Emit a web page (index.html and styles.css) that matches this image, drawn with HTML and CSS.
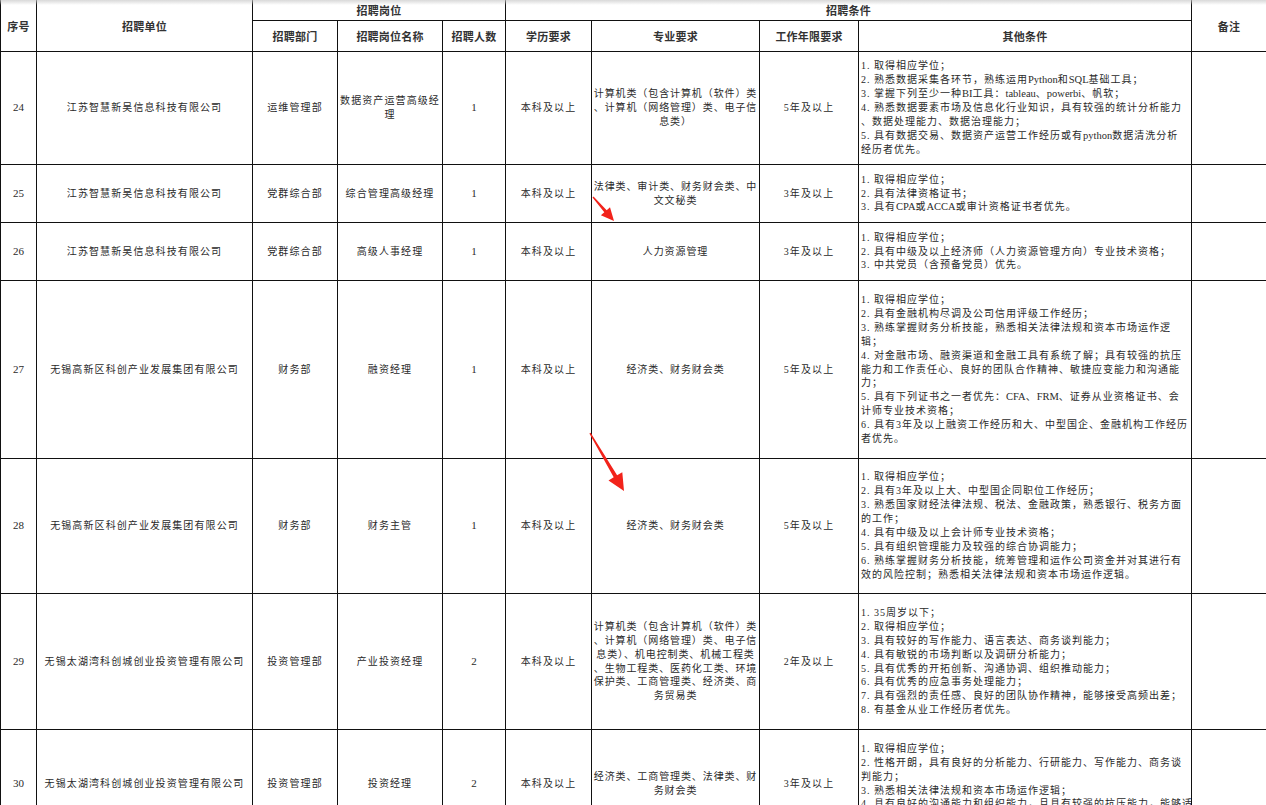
FILE: index.html
```html
<!DOCTYPE html>
<html lang="zh-CN">
<head>
<meta charset="utf-8">
<title>招聘岗位表</title>
<link rel="stylesheet" href="styles.css">
</head>
<body>
<div class="page">
<table class="grid">
  <colgroup>
    <col class="w-no"><col class="w-unit"><col class="w-dept"><col class="w-post"><col class="w-num"><col class="w-edu"><col class="w-major"><col class="w-year"><col class="w-other"><col class="w-note">
  </colgroup>
  <thead>
    <tr class="h1">
      <th rowspan="2">序号</th>
      <th rowspan="2">招聘单位</th>
      <th colspan="3">招聘岗位</th>
      <th colspan="4">招聘条件</th>
      <th rowspan="2">备注</th>
    </tr>
    <tr class="h2">
      <th>招聘部门</th>
      <th>招聘岗位名称</th>
      <th>招聘人数</th>
      <th>学历要求</th>
      <th>专业要求</th>
      <th>工作年限要求</th>
      <th>其他条件</th>
    </tr>
  </thead>
  <tbody>
    <tr class="r24">
      <td class="num">24</td>
      <td>江苏智慧新吴信息科技有限公司</td>
      <td>运维管理部</td>
      <td>数据资产运营高级经<br>理</td>
      <td class="num">1</td>
      <td>本科及以上</td>
      <td class="major">计算机类（包含计算机（软件）类<br>、计算机（网络管理）类、电子信<br>息类）</td>
      <td>5年及以上</td>
      <td class="other">1. 取得相应学位；<br>2. 熟悉数据采集各环节，熟练运用<span class="lat">Python</span>和<span class="lat">SQL</span>基础工具；<br>3. 掌握下列至少一种<span class="lat">BI</span>工具：<span class="lat">tableau</span>、<span class="lat">powerbi</span>、帆软；<br>4. 熟悉数据要素市场及信息化行业知识，具有较强的统计分析能力<br>、数据处理能力、数据治理能力；<br>5. 具有数据交易、数据资产运营工作经历或有<span class="lat">python</span>数据清洗分析<br>经历者优先。</td>
      <td></td>
    </tr>
    <tr class="r25">
      <td class="num">25</td>
      <td>江苏智慧新吴信息科技有限公司</td>
      <td>党群综合部</td>
      <td>综合管理高级经理</td>
      <td class="num">1</td>
      <td>本科及以上</td>
      <td class="major">法律类、审计类、财务财会类、中<br>文文秘类</td>
      <td>3年及以上</td>
      <td class="other">1. 取得相应学位；<br>2. 具有法律资格证书；<br>3. 具有<span class="lat">CPA</span>或<span class="lat">ACCA</span>或审计资格证书者优先。</td>
      <td></td>
    </tr>
    <tr class="r26">
      <td class="num">26</td>
      <td>江苏智慧新吴信息科技有限公司</td>
      <td>党群综合部</td>
      <td>高级人事经理</td>
      <td class="num">1</td>
      <td>本科及以上</td>
      <td class="major">人力资源管理</td>
      <td>3年及以上</td>
      <td class="other">1. 取得相应学位；<br>2. 具有中级及以上经济师（人力资源管理方向）专业技术资格；<br>3. 中共党员（含预备党员）优先。</td>
      <td></td>
    </tr>
    <tr class="r27">
      <td class="num">27</td>
      <td>无锡高新区科创产业发展集团有限公司</td>
      <td>财务部</td>
      <td>融资经理</td>
      <td class="num">1</td>
      <td>本科及以上</td>
      <td class="major">经济类、财务财会类</td>
      <td>5年及以上</td>
      <td class="other">1. 取得相应学位；<br>2. 具有金融机构尽调及公司信用评级工作经历；<br>3. 熟练掌握财务分析技能，熟悉相关法律法规和资本市场运作逻<br>辑；<br>4. 对金融市场、融资渠道和金融工具有系统了解；具有较强的抗压<br>能力和工作责任心、良好的团队合作精神、敏捷应变能力和沟通能<br>力；<br>5. 具有下列证书之一者优先：<span class="lat">CFA</span>、<span class="lat">FRM</span>、证券从业资格证书、会<br>计师专业技术资格；<br>6. 具有3年及以上融资工作经历和大、中型国企、金融机构工作经历<br>者优先。</td>
      <td></td>
    </tr>
    <tr class="r28">
      <td class="num">28</td>
      <td>无锡高新区科创产业发展集团有限公司</td>
      <td>财务部</td>
      <td>财务主管</td>
      <td class="num">1</td>
      <td>本科及以上</td>
      <td class="major">经济类、财务财会类</td>
      <td>5年及以上</td>
      <td class="other">1. 取得相应学位；<br>2. 具有3年及以上大、中型国企同职位工作经历；<br>3. 熟悉国家财经法律法规、税法、金融政策，熟悉银行、税务方面<br>的工作；<br>4. 具有中级及以上会计师专业技术资格；<br>5. 具有组织管理能力及较强的综合协调能力；<br>6. 熟练掌握财务分析技能，统筹管理和运作公司资金并对其进行有<br>效的风险控制；熟悉相关法律法规和资本市场运作逻辑。</td>
      <td></td>
    </tr>
    <tr class="r29">
      <td class="num">29</td>
      <td>无锡太湖湾科创城创业投资管理有限公司</td>
      <td>投资管理部</td>
      <td>产业投资经理</td>
      <td class="num">2</td>
      <td>本科及以上</td>
      <td class="major">计算机类（包含计算机（软件）类<br>、计算机（网络管理）类、电子信<br>息类）、机电控制类、机械工程类<br>、生物工程类、医药化工类、环境<br>保护类、工商管理类、经济类、商<br>务贸易类</td>
      <td>2年及以上</td>
      <td class="other">1. 35周岁以下；<br>2. 取得相应学位；<br>3. 具有较好的写作能力、语言表达、商务谈判能力；<br>4. 具有敏锐的市场判断以及调研分析能力；<br>5. 具有优秀的开拓创新、沟通协调、组织推动能力；<br>6. 具有优秀的应急事务处理能力；<br>7. 具有强烈的责任感、良好的团队协作精神，能够接受高频出差；<br>8. 有基金从业工作经历者优先。</td>
      <td></td>
    </tr>
    <tr class="r30">
      <td class="num">30</td>
      <td>无锡太湖湾科创城创业投资管理有限公司</td>
      <td>投资管理部</td>
      <td>投资经理</td>
      <td class="num">2</td>
      <td>本科及以上</td>
      <td class="major">经济类、工商管理类、法律类、财<br>务财会类</td>
      <td>3年及以上</td>
      <td class="other">1. 取得相应学位；<br>2. 性格开朗，具有良好的分析能力、行研能力、写作能力、商务谈<br>判能力；<br>3. 熟悉相关法律法规和资本市场运作逻辑；<br>4. 具有良好的沟通能力和组织能力，且具有较强的抗压能力，能够适<br>应高频出差。</td>
      <td></td>
    </tr>
  </tbody>
</table>

<div class="topshade"></div>

<svg class="marks" width="1266" height="805" viewBox="0 0 1266 805" xmlns="http://www.w3.org/2000/svg">
  <polygon fill="#f2231b" points="592.5,197.4 604.3,212.3 600.9,215.2 614,221 610,207.3 606.7,210.2 593.5,196.6"/>
  <polygon fill="#f2231b" points="589.4,433.4 613.7,477.3 608.5,480.4 624,491 622.3,472.3 617.1,475.3 590.6,432.7"/>
</svg>
</div>
</body>
</html>
```

FILE: styles.css
```css
html, body {
  margin: 0;
  padding: 0;
  background: #ffffff;
  overflow: hidden;
}

.page {
  position: relative;
  width: 1266px;
  height: 805px;
  overflow: hidden;
}

.grid {
  width: 1266px;
  table-layout: fixed;
  border-collapse: collapse;
  font-family: "Liberation Serif", "Noto Sans CJK SC", serif;
  font-size: 10px;
  color: #2a2a2a;
}

.w-no { width: 36px; }
.w-unit { width: 216px; }
.w-dept { width: 85px; }
.w-post { width: 105px; }
.w-num { width: 63px; }
.w-edu { width: 86px; }
.w-major { width: 168px; }
.w-year { width: 99px; }
.w-other { width: 333px; }
.w-note { width: 75px; }

.grid th,
.grid td {
  border: 1px solid #111;
  padding: 0 1px;
  text-align: center;
  vertical-align: middle;
  white-space: nowrap;
  overflow: hidden;
}

.grid thead tr.h1 th {
  border-top: none;
}

.grid th {
  font-family: "Noto Sans CJK SC", sans-serif;
  font-weight: 700;
  font-size: 11px;
  letter-spacing: 0.2px;
  color: #333;
  line-height: 14px;
}

.grid td {
  letter-spacing: 1.1px;
  line-height: 13.8px;
}

.grid td.num {
  font-size: 11px;
  letter-spacing: 0;
}

.grid td.major {
  letter-spacing: 0.9px;
  padding: 0;
}

.grid td.other {
  text-align: left;
  padding-left: 2px;
  letter-spacing: 1px;
  line-height: 13.9px;
}

.lat {
  letter-spacing: 0;
  font-size: 10.5px;
}

.h1 th { height: 20px; }
.h2 th { height: 30px; }
.r24 td { height: 112px; }
.r25 td { height: 57px; }
.r26 td { height: 57px; }
.r27 td { height: 177px; }
.r28 td { height: 134px; }
.r29 td { height: 135px; }
.r30 td { height: 107px; }

.topshade {
  position: absolute;
  left: 0;
  top: 0;
  width: 1266px;
  height: 5px;
  background: linear-gradient(to bottom, rgba(200, 200, 200, 0.7), rgba(230, 230, 230, 0));
}

.marks {
  position: absolute;
  left: 0;
  top: 0;
  pointer-events: none;
}
```
